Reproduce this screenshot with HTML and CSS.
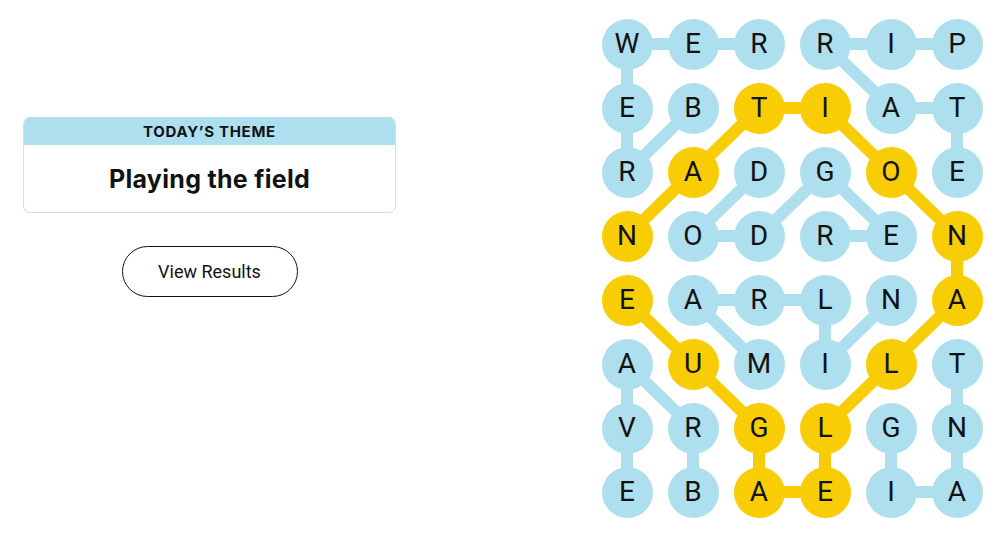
FILE: index.html
```html
<!DOCTYPE html>
<html lang="en">
<head>
<meta charset="utf-8">
<title>Strands</title>
<link rel="stylesheet" href="styles.css">
</head>
<body>
<main class="page">
  <section class="side">
    <div class="theme-card">
      <div class="theme-head">TODAY’S THEME</div>
      <div class="theme-body">Playing the field</div>
    </div>
    <button class="results-btn" type="button">View Results</button>
  </section>
  <section class="board">
    <svg class="links" width="396" height="512" viewBox="0 0 396 512" aria-hidden="true">
      <g class="blue-links">
        <polyline points="99,96 33,160 33,96 33,32 99,32 165,32"/>
        <polyline points="363,32 297,32 231,32 297,96 363,96 363,160"/>
        <polyline points="165,160 99,224 165,224 231,160 297,224 231,224"/>
        <polyline points="165,352 99,288 165,288 231,288 231,352 297,288"/>
        <polyline points="99,480 99,416 33,352 33,416 33,480"/>
        <polyline points="297,416 297,480 363,480 363,416 363,352"/>
      </g>
      <g class="gold-links">
        <polyline points="33,224 99,160 165,96 231,96 297,160 363,224 363,288 297,352 231,416 231,480 165,480 165,416 99,352 33,288"/>
      </g>
    </svg>
    <div class="grid">
      <div class="cell"><span class="dot">W</span></div>
      <div class="cell"><span class="dot">E</span></div>
      <div class="cell"><span class="dot">R</span></div>
      <div class="cell"><span class="dot">R</span></div>
      <div class="cell"><span class="dot">I</span></div>
      <div class="cell"><span class="dot">P</span></div>

      <div class="cell"><span class="dot">E</span></div>
      <div class="cell"><span class="dot">B</span></div>
      <div class="cell"><span class="dot gold">T</span></div>
      <div class="cell"><span class="dot gold">I</span></div>
      <div class="cell"><span class="dot">A</span></div>
      <div class="cell"><span class="dot">T</span></div>

      <div class="cell"><span class="dot">R</span></div>
      <div class="cell"><span class="dot gold">A</span></div>
      <div class="cell"><span class="dot">D</span></div>
      <div class="cell"><span class="dot">G</span></div>
      <div class="cell"><span class="dot gold">O</span></div>
      <div class="cell"><span class="dot">E</span></div>

      <div class="cell"><span class="dot gold">N</span></div>
      <div class="cell"><span class="dot">O</span></div>
      <div class="cell"><span class="dot">D</span></div>
      <div class="cell"><span class="dot">R</span></div>
      <div class="cell"><span class="dot">E</span></div>
      <div class="cell"><span class="dot gold">N</span></div>

      <div class="cell"><span class="dot gold">E</span></div>
      <div class="cell"><span class="dot">A</span></div>
      <div class="cell"><span class="dot">R</span></div>
      <div class="cell"><span class="dot">L</span></div>
      <div class="cell"><span class="dot">N</span></div>
      <div class="cell"><span class="dot gold">A</span></div>

      <div class="cell"><span class="dot">A</span></div>
      <div class="cell"><span class="dot gold">U</span></div>
      <div class="cell"><span class="dot">M</span></div>
      <div class="cell"><span class="dot">I</span></div>
      <div class="cell"><span class="dot gold">L</span></div>
      <div class="cell"><span class="dot">T</span></div>

      <div class="cell"><span class="dot">V</span></div>
      <div class="cell"><span class="dot">R</span></div>
      <div class="cell"><span class="dot gold">G</span></div>
      <div class="cell"><span class="dot gold">L</span></div>
      <div class="cell"><span class="dot">G</span></div>
      <div class="cell"><span class="dot">N</span></div>

      <div class="cell"><span class="dot">E</span></div>
      <div class="cell"><span class="dot">B</span></div>
      <div class="cell"><span class="dot gold">A</span></div>
      <div class="cell"><span class="dot gold">E</span></div>
      <div class="cell"><span class="dot">I</span></div>
      <div class="cell"><span class="dot">A</span></div>
    </div>
  </section>
</main>
</body>
</html>
```

FILE: styles.css
```css
* {
  box-sizing: border-box;
}

html, body {
  margin: 0;
  padding: 0;
  background: #ffffff;
}

body {
  font-family: Roboto, "Liberation Sans", sans-serif;
  color: #121212;
}

.page {
  display: flex;
  align-items: flex-start;
  width: 1000px;
  height: 534px;
  overflow: hidden;
}

.side {
  width: 419px;
  flex: none;
  padding-top: 117px;
  display: flex;
  flex-direction: column;
  align-items: center;
}

.theme-card {
  width: 373px;
  border: 1px solid #dcdcdc;
  border-top: none;
  border-radius: 7px;
  overflow: hidden;
  background: #ffffff;
}

.theme-head {
  height: 28px;
  background: #aedfee;
  display: flex;
  align-items: center;
  justify-content: center;
  font-family: Inter, "Liberation Sans", sans-serif;
  font-weight: 700;
  font-size: 15px;
  letter-spacing: 0.7px;
  color: #121212;
}

.theme-body {
  height: 67px;
  display: flex;
  align-items: center;
  justify-content: center;
  font-family: Inter, "Liberation Sans", sans-serif;
  font-weight: 700;
  font-size: 25px;
  letter-spacing: 0.3px;
  color: #121212;
}

.results-btn {
  margin-top: 33px;
  width: 176px;
  height: 51px;
  border: 1px solid #121212;
  border-radius: 26px;
  background: #ffffff;
  font-family: Roboto, "Liberation Sans", sans-serif;
  font-size: 18px;
  font-weight: 400;
  color: #121212;
  padding: 0;
}

.board {
  position: relative;
  margin-left: 175px;
  margin-top: 12px;
  width: 396px;
  height: 512px;
  flex: none;
}

.links {
  position: absolute;
  left: 0;
  top: 0;
  z-index: 0;
}

.links polyline {
  fill: none;
  stroke-width: 12;
  stroke-linejoin: round;
}

.blue-links polyline {
  stroke: #aedfee;
}

.gold-links polyline {
  stroke: #f8cd05;
}

.grid {
  position: relative;
  z-index: 1;
  display: grid;
  grid-template-columns: repeat(6, 66px);
  grid-template-rows: repeat(8, 64px);
}

.cell {
  display: flex;
  align-items: center;
  justify-content: center;
}

.dot {
  width: 51px;
  height: 51px;
  border-radius: 50%;
  background: #aedfee;
  display: flex;
  align-items: center;
  justify-content: center;
  font-family: Roboto, "Liberation Sans", sans-serif;
  font-size: 28px;
  font-weight: 400;
  color: #121212;
  line-height: 1;
}

.dot.gold {
  background: #f8cd05;
}
```
